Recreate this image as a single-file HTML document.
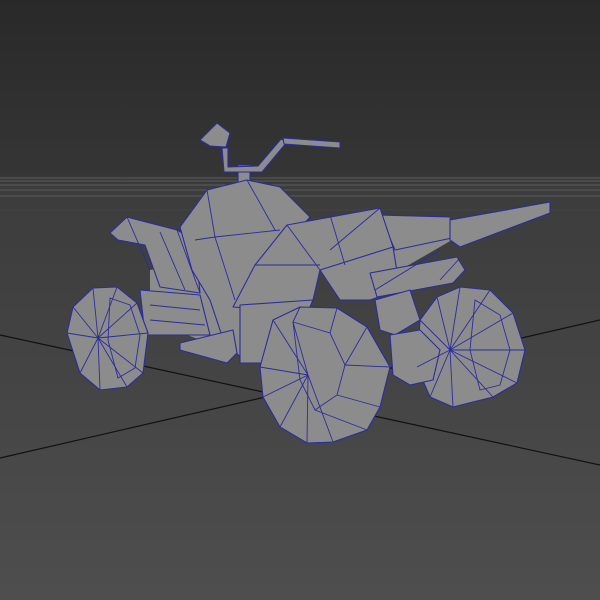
<!DOCTYPE html>
<html><head><style>
html,body{margin:0;padding:0;width:600px;height:600px;overflow:hidden;background:#333}
svg{display:block}
</style></head><body>
<svg width="600" height="600" viewBox="0 0 600 600" xmlns="http://www.w3.org/2000/svg">
<defs>
<linearGradient id="bg" x1="0" y1="0" x2="0" y2="1">
<stop offset="0" stop-color="#292929"/>
<stop offset="0.29" stop-color="#353535"/>
<stop offset="0.31" stop-color="#3c3c3c"/>
<stop offset="1" stop-color="#4e4e4e"/>
</linearGradient>
</defs>
<rect width="600" height="600" fill="url(#bg)"/>
<g stroke="#5c5c5c" stroke-width="1">
<line x1="0" y1="178" x2="600" y2="178"/>
<line x1="0" y1="181" x2="600" y2="181"/>
<line x1="0" y1="185" x2="600" y2="185"/>
<line x1="0" y1="190" x2="600" y2="190"/>
<line x1="0" y1="196" x2="600" y2="196"/>
<line x1="0" y1="210" x2="600" y2="210" stroke="#444"/>
</g>
<g stroke="#111" stroke-width="1.2">
<line x1="0" y1="335" x2="600" y2="465"/>
<line x1="0" y1="458" x2="600" y2="320"/>
</g>
<g fill="#8c8c8c" stroke="#2c2c9e" stroke-width="1.1" stroke-linejoin="round">
<!-- handlebar -->
<polygon points="238,165 250,165 250,184 238,184"/>
<polygon points="222,148 228,148 228,167 258,166 281,139 287,142 262,172 224,172"/>
<polygon points="283,138 340,142 340,148 284,144"/>
<polygon points="200,140 217,123 230,133 226,147 210,146"/>
<!-- filler behind -->
<polygon points="150,270 200,260 240,300 240,350 200,340 150,320" stroke="none"/>
<polygon points="330,230 450,217 452,240 400,270 340,270" stroke="none"/>
<!-- right seat rear & spike -->
<polygon points="380,215 450,217 452,238 395,250"/>
<polygon points="450,220 550,202 550,213 460,247 450,240"/>
<!-- left fender -->
<polygon points="110,233 127,217 177,230 195,240 200,293 160,287 145,245 118,240"/>
<!-- springs/suspension -->
<polygon points="140,290 200,295 210,335 145,335"/>
<!-- main tank -->
<polygon points="180,227 207,190 247,180 280,187 310,217 290,240 255,300 245,360 225,345 210,300 192,270"/>
<!-- front arm -->
<polygon points="180,343 233,330 237,353 227,363 180,350"/>
<!-- body front -->
<polygon points="233,307 255,265 287,225 380,208 393,247 345,265 320,270 313,300 270,310"/>
<polygon points="240,305 313,300 300,330 262,363 240,363"/>
<polygon points="320,270 393,247 400,290 370,300 340,300"/>
<!-- exhaust -->
<polygon points="370,273 457,257 465,270 453,283 377,297"/>
<!-- mid frame -->
<polygon points="375,300 410,290 420,320 395,335 380,330"/>
<!-- left wheel -->
<polygon points="67,333 73,307 93,288 117,287 137,303 148,333 143,373 127,387 100,390 80,373"/>
<!-- right rear wheel -->
<polygon points="417,367 420,320 437,297 460,287 490,290 513,313 525,350 517,383 493,397 453,407 430,397"/>
<!-- axle -->
<polygon points="390,335 420,330 440,350 433,380 410,385 393,375"/>
<!-- front big wheel -->
<polygon points="260,367 273,320 300,307 337,308 367,327 390,367 380,407 367,430 333,442 307,443 280,427 263,397"/>
</g>
<g fill="none" stroke="#2c2c9e" stroke-width="0.9">
<path d="M98,338 L67,333 M98,338 L73,307 M98,338 L93,288 M98,338 L117,287 M98,338 L137,303 M98,338 L148,333 M98,338 L143,373 M98,338 L127,387 M98,338 L100,390 M98,338 L80,373"/>
<polygon points="110,298 130,305 140,335 135,368 118,378 108,340"/>
<path d="M450,350 L417,367 M450,350 L420,320 M450,350 L437,297 M450,350 L460,287 M450,350 L490,290 M450,350 L513,313 M450,350 L525,350 M450,350 L517,383 M450,350 L493,397 M450,350 L453,407 M450,350 L430,397"/>
<polygon points="475,300 500,315 510,350 500,385 480,390 470,350"/>
<polygon points="293,322 330,333 345,365 337,395 315,410 300,380"/>
<path d="M308,375 L260,367 M308,375 L273,320 M308,375 L293,322 M308,375 L263,397 M308,375 L280,427 M308,375 L307,443 M308,375 L333,442 M300,307 L293,322 M337,308 L330,333 M367,327 L345,365 M390,367 L345,365 M380,407 L337,395 M367,430 L315,410"/>
<path d="M207,190 L215,237 L235,300 M247,180 L275,230 M215,237 L280,230 M195,240 L215,237 M127,217 L150,270 M160,232 L185,290 M177,230 L200,293"/>
<path d="M287,225 L320,270 M330,215 L345,265 M380,208 L330,250 M255,265 L320,265 M150,305 L200,310 M150,320 L205,325 M375,290 L440,250 M440,280 L460,258"/>
</g>
</svg>
</body></html>
